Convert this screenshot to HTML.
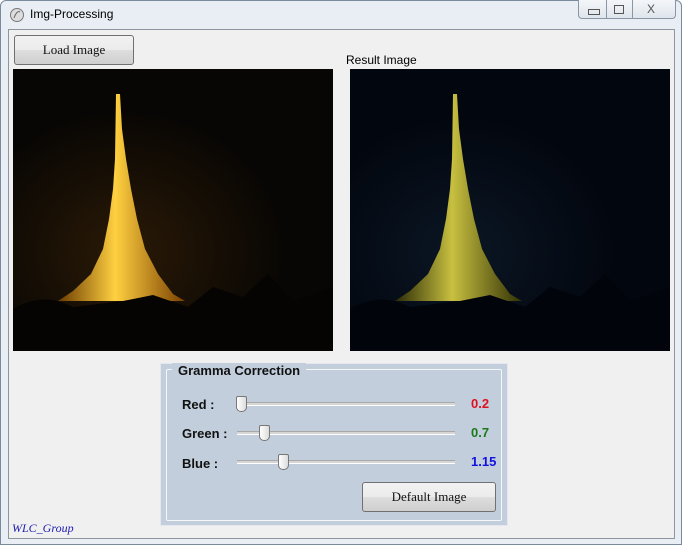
<!DOCTYPE html>
<html><head><style>
body{margin:0;width:682px;height:545px;overflow:hidden;background:#fff;font-family:"Liberation Sans",sans-serif;position:relative}
.frame{position:absolute;left:0;top:0;width:680px;height:543px;border:1px solid #7a8a9c;border-radius:6px 6px 0 0;background:#e9eef5}
.client{position:absolute;left:8px;top:29px;width:665px;height:508px;background:#f0f0f0;border:1px solid #8d96a0}
.abs{position:absolute}
.btn{position:absolute;border:1px solid #707070;border-radius:3px;background:linear-gradient(#f2f2f2,#ebebeb 50%,#dddddd 51%,#cfcfcf);font-family:"Liberation Serif",serif;font-size:13px;text-align:center;color:#111}
.track{position:absolute;height:2px;background:#d6d6d6;border-top:1px solid #a8a8a8;border-bottom:1px solid #fff}
.thumb{position:absolute;width:9px;height:14px;background:linear-gradient(90deg,#fff,#dcdcdc);border:1px solid #777;border-radius:2px 2px 5px 5px}
.lbl{position:absolute;font-size:13px;font-weight:bold;color:#111}
</style></head><body>
<div class="frame"></div>
<svg class="abs" style="left:9px;top:7px" width="16" height="16"><circle cx="8" cy="8" r="6.5" fill="#ddd" stroke="#777"/><path d="M5 11 Q8 3 11 5" stroke="#666" fill="none"/></svg>
<div class="abs" style="left:30px;top:7px;font-size:12px;color:#000">Img-Processing</div>
<div class="abs" style="left:578px;top:0;width:96px;height:18px;border:1px solid #8a96a4;border-top:none;border-radius:0 0 4px 4px;background:linear-gradient(#f4f6f9,#dfe5ec)"></div>
<div class="abs" style="left:606px;top:0;width:1px;height:18px;background:#8a96a4"></div>
<div class="abs" style="left:632px;top:0;width:1px;height:18px;background:#8a96a4"></div>
<div class="abs" style="left:588px;top:9px;width:10px;height:4px;border:1px solid #555"></div>
<div class="abs" style="left:614px;top:5px;width:8px;height:7px;border:1px solid #555"></div>
<div class="abs" style="left:647px;top:2px;font-size:12px;color:#555">X</div>
<div class="client"></div>
<div class="btn" style="left:14px;top:35px;width:118px;height:28px;line-height:28px">Load Image</div>
<div class="abs" style="left:346px;top:53px;font-size:12px">Result Image</div>
<svg class="abs" style="left:13px;top:69px" width="320" height="282">
<defs><linearGradient id="g1" x1="0" x2="1"><stop offset="0" stop-color="#6a3a00"/><stop offset=".45" stop-color="#ffd040"/><stop offset="1" stop-color="#7a4000"/></linearGradient>
<radialGradient id="h1" cx=".35" cy=".65" r=".5"><stop offset="0" stop-color="#2a1a06"/><stop offset="1" stop-color="#080604"/></radialGradient></defs>
<rect width="320" height="282" fill="url(#h1)"/>
<path d="M103 25 L107 25 L109 60 L113 90 L118 120 L124 150 L132 180 L145 205 L160 225 L172 232 L45 232 L60 222 L78 205 L90 180 L96 150 L100 120 L102 90 Z" fill="url(#g1)"/>
<path d="M0 282 L0 240 Q30 222 60 238 L110 232 L140 226 L175 238 L200 218 L230 228 L255 205 L280 232 L320 218 L320 282Z" fill="#060402"/>
</svg>
<svg class="abs" style="left:350px;top:69px" width="320" height="282">
<defs><linearGradient id="g2" x1="0" x2="1"><stop offset="0" stop-color="#2a2a05"/><stop offset=".45" stop-color="#c8c040"/><stop offset="1" stop-color="#303005"/></linearGradient>
<radialGradient id="h2" cx=".35" cy=".65" r=".5"><stop offset="0" stop-color="#0b1624"/><stop offset="1" stop-color="#02060e"/></radialGradient></defs>
<rect width="320" height="282" fill="url(#h2)"/>
<path d="M103 25 L107 25 L109 60 L113 90 L118 120 L124 150 L132 180 L145 205 L160 225 L172 232 L45 232 L60 222 L78 205 L90 180 L96 150 L100 120 L102 90 Z" fill="url(#g2)"/>
<path d="M0 282 L0 240 Q30 222 60 238 L110 232 L140 226 L175 238 L200 218 L230 228 L255 205 L280 232 L320 218 L320 282Z" fill="#01040a"/>
</svg>
<div class="abs" style="left:160px;top:363px;width:346px;height:161px;background:#c2cedc;border:1px solid #e4e8ee"></div>
<div class="abs" style="left:166px;top:369px;width:334px;height:150px;border:1px solid #f4f6f8;border-radius:2px"></div>
<div class="abs" style="left:172px;top:363px;padding:0 6px;background:#c2cedc;font-size:13px;font-weight:bold;color:#111">Gramma Correction</div>
<div class="lbl" style="left:182px;top:397px">Red :</div>
<div class="lbl" style="left:182px;top:426px">Green :</div>
<div class="lbl" style="left:182px;top:456px">Blue :</div>
<div class="track" style="left:237px;top:402px;width:218px"></div>
<div class="track" style="left:237px;top:431px;width:218px"></div>
<div class="track" style="left:237px;top:460px;width:218px"></div>
<div class="thumb" style="left:236px;top:396px"></div>
<div class="thumb" style="left:259px;top:425px"></div>
<div class="thumb" style="left:278px;top:454px"></div>
<div class="lbl" style="left:471px;top:396px;color:#e01020">0.2</div>
<div class="lbl" style="left:471px;top:425px;color:#1a7a1a">0.7</div>
<div class="lbl" style="left:471px;top:454px;color:#1010e0">1.15</div>
<div class="btn" style="left:362px;top:482px;width:132px;height:28px;line-height:28px">Default Image</div>
<div class="abs" style="left:12px;top:521px;font-family:'Liberation Serif',serif;font-style:italic;font-size:12px;color:#2020b0">WLC_Group</div>
</body></html>
